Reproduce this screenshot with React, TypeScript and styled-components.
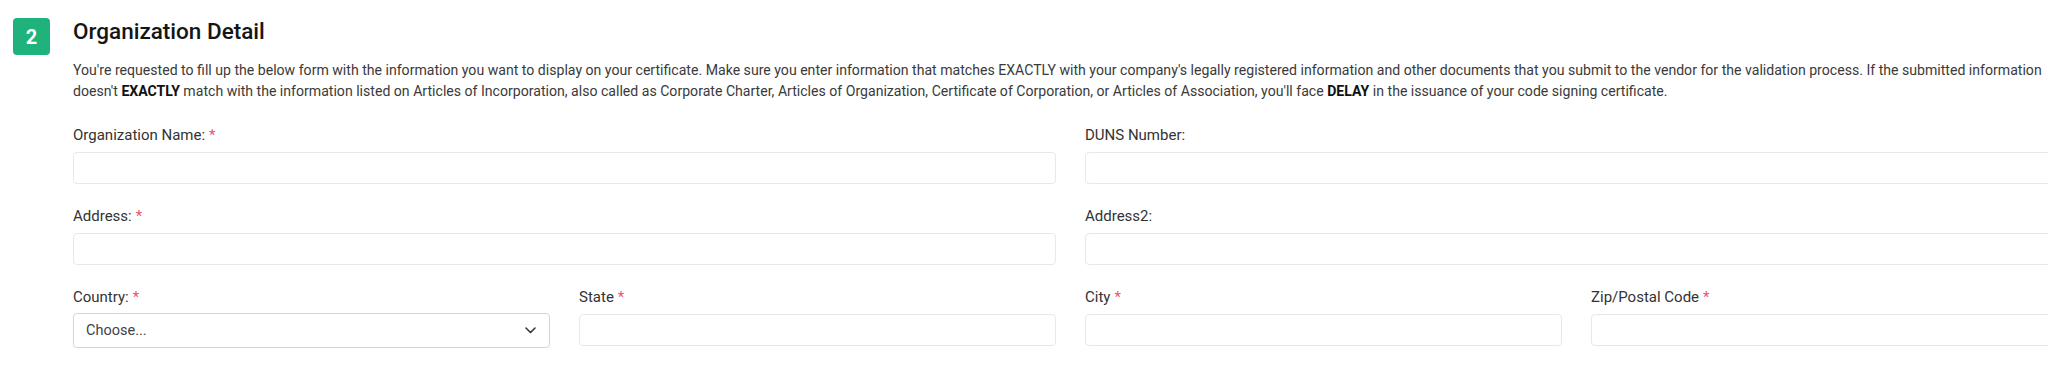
import React from 'react'
import styled, { createGlobalStyle } from 'styled-components'

const GlobalStyle = createGlobalStyle`
  body {
    margin: 0;
    background: #ffffff;
    font-family: Roboto, "Liberation Sans", Arial, sans-serif;
    overflow: hidden;
  }
  * { box-sizing: border-box; }
`

const Section = styled.section`
  display: flex;
  gap: 23px;
  padding: 18px 0 0 13px;
  width: 2120px;
`

const StepBadge = styled.div`
  flex: 0 0 37px;
  height: 37px;
  border-radius: 4px;
  background: #1fb37b;
  color: #fff;
  font-size: 20px;
  font-weight: 700;
  display: flex;
  align-items: center;
  justify-content: center;
`

const Body = styled.div`
  display: flex;
  flex-direction: column;
`

const Title = styled.h2`
  margin: 0;
  font-size: 22.5px;
  line-height: 27px;
  font-weight: 500;
  color: #151515;
`

const Intro = styled.p`
  margin: 15px 0 0;
  font-size: 14.1px;
  line-height: 21.4px;
  color: #3a3a3a;
  width: 1985px;

  b { font-weight: 700; color: #111; }
`

const FormGrid = styled.div`
  display: grid;
  grid-template-columns: repeat(4, 477px);
  column-gap: 29px;
  row-gap: 22px;
  margin-top: 22px;
`

const Field = styled.div<{ $span?: number }>`
  grid-column: span ${p => p.$span ?? 1};
  display: flex;
  flex-direction: column;
`

const Label = styled.label`
  font-size: 15px;
  line-height: 21px;
  color: #333;
  margin-bottom: 6px;
`

const Req = styled.span`
  color: #f0506e;
  margin-left: 4px;
`

const TextInput = styled.input`
  height: 32px;
  border: 1px solid #e6e8eb;
  border-radius: 4px;
  background: #fff;
  font: inherit;
  padding: 0 12px;
`

const SelectBox = styled.div`
  position: relative;
  height: 35px;
  margin-top: -1px;
  border: 1px solid #d3d7dd;
  border-radius: 4px;
  box-shadow: 0 1px 2px rgba(0, 0, 0, 0.04);
  display: flex;
  align-items: center;
  justify-content: space-between;
  padding: 0 13px 0 12px;
  font-size: 14.5px;
  color: #3d4349;
`

const Chevron = () => (
  <svg width="11" height="7" viewBox="0 0 11 7" fill="none">
    <path d="M1 1l4.5 4.5L10 1" stroke="#343a40" strokeWidth="1.6" strokeLinecap="round" strokeLinejoin="round" />
  </svg>
)

type FieldDef = { label: string; required?: boolean; span?: number; select?: boolean }

const fields: FieldDef[] = [
  { label: 'Organization Name:', required: true, span: 2 },
  { label: 'DUNS Number:', span: 2 },
  { label: 'Address:', required: true, span: 2 },
  { label: 'Address2:', span: 2 },
  { label: 'Country:', required: true, select: true },
  { label: 'State', required: true },
  { label: 'City', required: true },
  { label: 'Zip/Postal Code', required: true },
]

const App = () => {
  return (
    <>
      <GlobalStyle />
      <Section>
        <StepBadge>2</StepBadge>
        <Body>
          <Title>Organization Detail</Title>
          <Intro>
            You're requested to fill up the below form with the information you want to display on your certificate. Make sure you enter information that matches EXACTLY with your company's legally registered information and other documents that you submit to the vendor for the validation process. If the submitted information doesn't <b>EXACTLY</b> match with the information listed on Articles of Incorporation, also called as Corporate Charter, Articles of Organization, Certificate of Corporation, or Articles of Association, you'll face <b>DELAY</b> in the issuance of your code signing certificate.
          </Intro>
          <FormGrid>
            {fields.map(f => (
              <Field key={f.label} $span={f.span}>
                <Label>
                  {f.label}
                  {f.required && <Req>*</Req>}
                </Label>
                {f.select ? (
                  <SelectBox>
                    <span>Choose...</span>
                    <Chevron />
                  </SelectBox>
                ) : (
                  <TextInput type="text" />
                )}
              </Field>
            ))}
          </FormGrid>
        </Body>
      </Section>
    </>
  )
}

export default App
